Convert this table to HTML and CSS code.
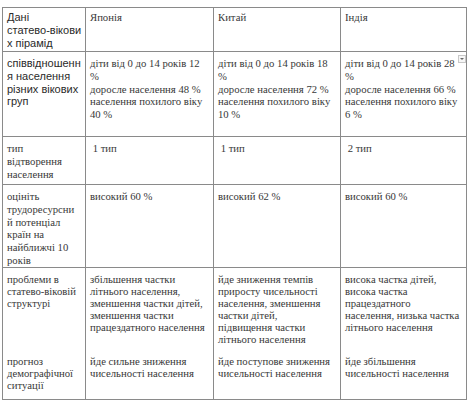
FILE: index.html
```html
<!DOCTYPE html>
<html lang="uk">
<head>
<meta charset="utf-8">
<title>Дані статево-вікових пірамід</title>
<link rel="stylesheet" href="styles.css">
</head>
<body>
<div class="page">
<table class="pyramids">
  <colgroup>
    <col class="c1"><col class="c2"><col class="c3"><col class="c4">
  </colgroup>
  <tr class="r-head">
    <td class="sans">Дані<br>статево-вікови<br>х пірамід</td>
    <td>Японія</td>
    <td>Китай</td>
    <td>Індія</td>
  </tr>
  <tr class="r-ratio">
    <td class="sans">співвідношенн<br>я населення<br>різних вікових<br>груп</td>
    <td>діти від 0 до 14 років 12<br>%<br>доросле населення 48 %<br>населення похилого віку<br>40 %</td>
    <td>діти від 0 до 14 років 18<br>%<br>доросле населення 72 %<br>населення похилого віку<br>10 %</td>
    <td class="has-handle">діти від 0 до 14 років 28<br>%<br>доросле населення 66 %<br>населення похилого віку<br>6 %<span class="handle" aria-hidden="true"></span></td>
  </tr>
  <tr class="r-type">
    <td>тип<br>відтворення<br>населення</td>
    <td>&nbsp;1 тип</td>
    <td>&nbsp;1 тип</td>
    <td>&nbsp;2 тип</td>
  </tr>
  <tr class="r-labour">
    <td>оцініть<br>трудоресурсни<br>й потенціал<br>країн на<br>найближчі 10<br>років</td>
    <td>високий 60 %</td>
    <td>високий 62 %</td>
    <td>високий 60 %</td>
  </tr>
  <tr class="r-problems">
    <td>проблеми в<br>статево-віковій<br>структурі</td>
    <td>збільшення частки<br>літнього населення,<br>зменшення частки дітей,<br>зменшення частки<br>працездатного населення</td>
    <td>йде зниження темпів<br>приросту чисельності<br>населення, зменшення<br>частки дітей,<br>підвищення частки<br>літнього населення</td>
    <td>висока частка дітей,<br>висока частка<br>працездатного<br>населення, низька частка<br>літнього населення</td>
  </tr>
  <tr class="r-forecast">
    <td>прогноз<br>демографічної<br>ситуації</td>
    <td>йде сильне зниження<br>чисельності населення</td>
    <td>йде поступове зниження<br>чисельності населення</td>
    <td>йде збільшення<br>чисельності населення</td>
  </tr>
</table>
</div>
</body>
</html>
```

FILE: styles.css
```css
html, body {
  margin: 0;
  padding: 0;
  background: #ffffff;
}

.page {
  padding: 7px 0 0 2px;
}

.pyramids {
  border-collapse: collapse;
  table-layout: fixed;
  width: 464px;
  font-family: "Liberation Serif", "Times New Roman", serif;
  font-size: 10.7px;
  line-height: 12.8px;
  color: #383838;
}

.c1 { width: 83px; }
.c2 { width: 128px; }
.c3 { width: 127px; }
.c4 { width: 126px; }

.pyramids td {
  border: 1px solid #8a8a8a;
  vertical-align: top;
  padding: 5px 2px 0 4px;
  white-space: nowrap;
  overflow: hidden;
}

.pyramids td.sans {
  font-family: "Liberation Sans", Arial, sans-serif;
  font-size: 11px;
  color: #2a2a2a;
}

.r-head td { padding-top: 3px; }

.r-head { height: 44px; }
.r-ratio { height: 85px; }
.r-type { height: 48px; }
.r-labour { height: 81px; }
.r-problems { height: 83px; }
.r-forecast { height: 49px; }

.r-problems td,
.r-forecast td {
  line-height: 12px;
}

.r-problems td { border-bottom-style: hidden; }
.r-forecast td { border-top-style: hidden; }

.has-handle { position: relative; }

.handle {
  position: absolute;
  top: 3px;
  right: 0;
  width: 6px;
  height: 6px;
  border: 1px solid #c8c8c8;
  background: #f6f6f6;
}

.handle::after {
  content: "";
  position: absolute;
  left: 1px;
  top: 2px;
  border-left: 2px solid transparent;
  border-right: 2px solid transparent;
  border-top: 2px solid #666;
}
```
